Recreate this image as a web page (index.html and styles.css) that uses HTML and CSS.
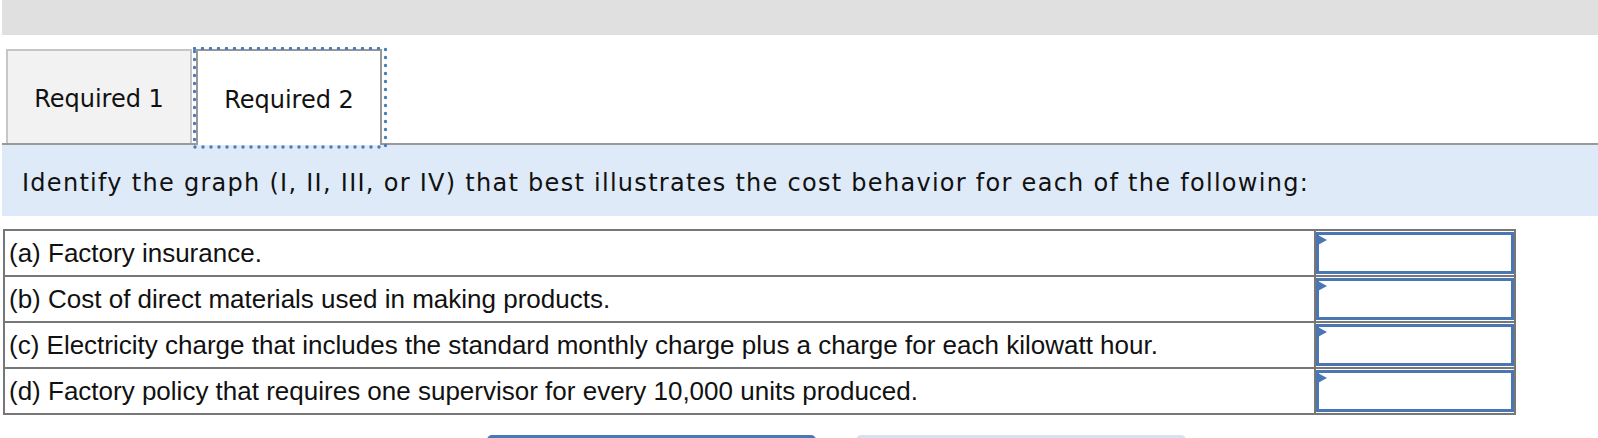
FILE: index.html
```html
<!DOCTYPE html>
<html>
<head>
<meta charset="utf-8">
<link rel="stylesheet" href="styles.css">
</head>
<body>
<div class="page">
  <div class="topbar"></div>
  <div class="tabs">
    <div class="tab">Required 1</div>
    <div class="tab active">Required 2
      <svg class="focus" width="196" height="102" viewBox="0 0 196 102"><rect x="1.5" y="1.5" width="191" height="98.5" fill="none" stroke="#4a7ab8" stroke-width="3.4" stroke-dasharray="0 8" stroke-linecap="round"/></svg>
    </div>
  </div>
  <div class="prompt">Identify the graph (I, II, III, or IV) that best illustrates the cost behavior for each of the following:</div>
  <table class="grid">
    <tr><td class="label">(a) Factory insurance.</td><td class="answer"><div class="box"><span class="mark"></span></div></td></tr>
    <tr><td class="label">(b) Cost of direct materials used in making products.</td><td class="answer"><div class="box"><span class="mark"></span></div></td></tr>
    <tr><td class="label">(c) Electricity charge that includes the standard monthly charge plus a charge for each kilowatt hour.</td><td class="answer"><div class="box"><span class="mark"></span></div></td></tr>
    <tr><td class="label">(d) Factory policy that requires one supervisor for every 10,000 units produced.</td><td class="answer"><div class="box"><span class="mark"></span></div></td></tr>
  </table>
  <div class="buttons">
    <div class="btn primary"></div>
    <div class="btn secondary"></div>
  </div>
</div>
</body>
</html>
```
FILE: styles.css
```css
html, body {
  margin: 0;
  padding: 0;
  background: #fff;
  overflow: hidden;
}
.page {
  padding-left: 2px;
  height: 438px;
  overflow: hidden;
}
.topbar {
  height: 35px;
  background: #e0e0e0;
}
.tabs {
  display: flex;
  gap: 4px;
  margin-top: 14px;
  padding-left: 4px;
  height: 94px;
  border-bottom: 2px solid #999;
  box-sizing: content-box;
}
.tab {
  width: 186px;
  box-sizing: border-box;
  border: 2px solid #c6c6c6;
  border-bottom: none;
  background: #f2f2f2;
  display: flex;
  align-items: center;
  justify-content: center;
  font-family: "DejaVu Sans", Verdana, sans-serif;
  font-size: 24px;
  color: #111;
  padding-top: 4px;
}
.tab.active {
  background: #fff;
  border-color: #999;
  height: 96px;
  position: relative;
  z-index: 1;
}
.focus {
  position: absolute;
  left: -5px;
  top: -4px;
}
.prompt {
  height: 71px;
  background: #deeaf7;
  display: flex;
  align-items: center;
  padding-left: 20px;
  padding-top: 4px;
  box-sizing: border-box;
  font-family: "DejaVu Sans", Verdana, sans-serif;
  font-size: 24px;
  letter-spacing: 1.28px;
  color: #111;
}
.grid {
  margin-top: 13px;
  margin-left: 1px;
  border-collapse: collapse;
  width: 1513px;
}
.grid td {
  border: 2px solid #777;
  padding: 0;
}
.label {
  font-family: "Liberation Sans", Arial, sans-serif;
  font-size: 26px;
  line-height: 30px;
  color: #111;
  padding-left: 4px !important;
}
.answer {
  width: 198px;
  padding: 1px 0 1px 0 !important;
}
.box {
  height: 42px;
  border: 3px solid #4a76b3;
  box-sizing: border-box;
  position: relative;
}
.mark {
  position: absolute;
  left: -3px;
  top: -1px;
  width: 0;
  height: 0;
  border-top: 6.5px solid transparent;
  border-bottom: 6.5px solid transparent;
  border-left: 11px solid #4a76b3;
}
.buttons {
  display: flex;
  gap: 40px;
  margin-top: 20px;
  padding-left: 485px;
}
.btn {
  height: 40px;
  border-radius: 5px;
}
.btn.primary {
  width: 329px;
  background: #4a77b5;
}
.btn.secondary {
  width: 330px;
  background: #d6e2f0;
}
```
